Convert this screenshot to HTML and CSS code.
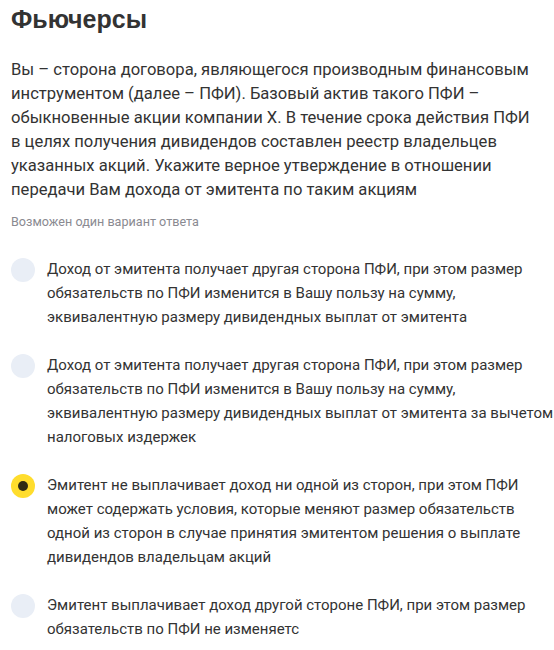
FILE: index.html
```html
<!DOCTYPE html>
<html lang="ru">
<head>
<meta charset="utf-8">
<link rel="stylesheet" href="styles.css">
</head>
<body>
<div class="page">
  <h1 class="title">Фьючерсы</h1>
  <p class="question">Вы – сторона договора, являющегося производным финансовым инструментом (далее – ПФИ). Базовый актив такого ПФИ – обыкновенные акции компании Х. В течение срока действия ПФИ в целях получения дивидендов составлен реестр владельцев указанных акций. Укажите верное утверждение в отношении передачи Вам дохода от эмитента по таким акциям</p>
  <div class="hint">Возможен один вариант ответа</div>
  <div class="options">
    <label class="option">
      <span class="radio"></span>
      <span class="text">Доход от эмитента получает другая сторона ПФИ, при этом размер обязательств по ПФИ изменится в Вашу пользу на сумму, эквивалентную размеру дивидендных выплат от эмитента</span>
    </label>
    <label class="option">
      <span class="radio"></span>
      <span class="text">Доход от эмитента получает другая сторона ПФИ, при этом размер обязательств по ПФИ изменится в Вашу пользу на сумму, эквивалентную размеру дивидендных выплат от эмитента за вычетом налоговых издержек</span>
    </label>
    <label class="option">
      <span class="radio checked"></span>
      <span class="text">Эмитент не выплачивает доход ни одной из сторон, при этом ПФИ может содержать условия, которые меняют размер обязательств одной из сторон в случае принятия эмитентом решения о выплате дивидендов владельцам акций</span>
    </label>
    <label class="option">
      <span class="radio"></span>
      <span class="text">Эмитент выплачивает доход другой стороне ПФИ, при этом размер обязательств по ПФИ не изменяетс</span>
    </label>
  </div>
</div>
</body>
</html>
```

FILE: styles.css
```css
html, body {
  margin: 0;
  padding: 0;
  background: #ffffff;
}
.page {
  padding: 3px 0 0 11px;
  font-family: "Roboto", "Liberation Sans", sans-serif;
  color: #333333;
}
.title {
  margin: 0;
  font-family: "Liberation Sans", Arial, sans-serif;
  font-size: 25px;
  line-height: 32px;
  font-weight: 700;
  color: #333333;
}
.question {
  margin: 23px 11px 0 0;
  font-size: 16.6px;
  line-height: 24px;
}
.hint {
  margin-top: 12px;
  font-size: 12.6px;
  line-height: 16px;
  color: #8a8a91;
}
.options {
  margin-top: 27px;
  display: flex;
  flex-direction: column;
  gap: 24px;
}
.option {
  display: flex;
  align-items: flex-start;
  gap: 12px;
}
.radio {
  flex: 0 0 24px;
  width: 24px;
  height: 24px;
  border-radius: 50%;
  background: #e9eef6;
  margin-top: 1px;
  display: flex;
  align-items: center;
  justify-content: center;
}
.radio.checked {
  background: #ffdd2d;
}
.radio.checked::after {
  content: "";
  width: 10px;
  height: 10px;
  border-radius: 50%;
  background: #2e2a13;
}
.text {
  font-size: 15px;
  line-height: 24px;
}
```
